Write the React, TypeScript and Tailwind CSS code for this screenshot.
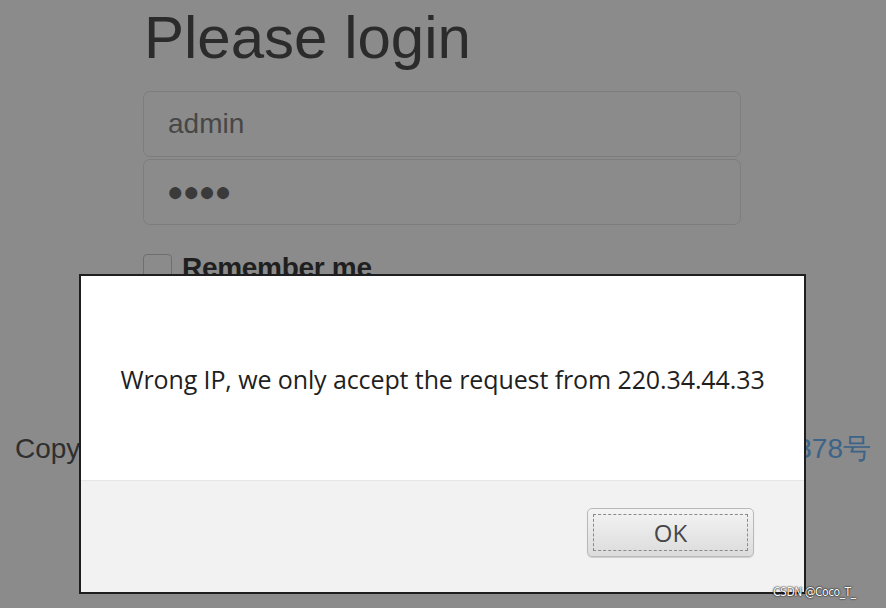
import React from 'react';

const LoginPage: React.FC = () => {
  return (
    <div className="relative h-[608px] w-[886px] overflow-hidden bg-[#8b8b8b] font-['Liberation_Sans',Arial,sans-serif]">
      <div className="ml-[143px] w-[598px] pt-[2px]">
        <h1 className="text-[60px] leading-[72px] text-[#2b2b2b] ml-[1px]">Please login</h1>
        <div className="mt-[17px] flex flex-col gap-[2px]">
          <div className="h-[66px] rounded-[7px] border border-[#7d7d7d] bg-[#8b8b8b] px-[24px] flex items-center text-[28px] text-[#474747]">
            admin
          </div>
          <div className="h-[66px] rounded-[7px] border border-[#7d7d7d] bg-[#8b8b8b] px-[23px] flex items-center text-[28px] tracking-[-1px] text-[#3a3a3a]">
            ●●●●
          </div>
        </div>
        <label className="mt-[22px] flex items-center gap-[10px]">
          <span className="h-[28px] w-[29px] rounded-[4px] border border-[#6f6f6f] bg-[#8b8b8b]" />
          <span className="text-[28px] font-bold text-[#1f1f1f] tracking-[-0.3px]">Remember me</span>
        </label>
      </div>

      <div className="mt-[139px] flex justify-between px-[15px] text-[28px]">
        <span className="text-[#2f2f2f]">Copyright © 2014 All Rights Reserved</span>
        <span className="text-[#3c6388]">京ICP备14012378号</span>
      </div>

      <div className="absolute left-[79px] top-[274px] flex h-[320px] w-[727px] flex-col border-2 border-[#1e1e1e] bg-white font-['Open_Sans',sans-serif]">
        <div className="flex h-[205px] items-center justify-center border-b border-[#e6e6e6] pt-[4px]">
          <p className="text-[25px] tracking-[-0.1px] text-[#1f1f1f]">
            Wrong IP, we only accept the request from 220.34.44.33
          </p>
        </div>
        <div className="flex flex-1 items-start justify-end bg-[#f2f2f2] pr-[50px] pt-[27px]">
          <button className="h-[49px] w-[167px] rounded-[5px] border border-[#b9b9b9] bg-gradient-to-b from-[#f4f4f4] to-[#dcdcdc] p-[5px] shadow-[0_1px_1px_rgba(0,0,0,0.15)]">
            <span className="flex h-full w-full items-center justify-center border border-dashed border-[#8a8a8a] text-[24px] text-[#474747]">
              OK
            </span>
          </button>
        </div>
      </div>

      <div className="absolute left-[773px] top-[583px] text-[12px] text-white font-['DejaVu_Sans_Condensed','DejaVu_Sans',sans-serif] tracking-[-0.5px] [text-shadow:0_0_2px_#000,0_0_1px_#000]">
        CSDN @Coco_T_
      </div>
    </div>
  );
};

export default function App() {
  return <LoginPage />;
}
